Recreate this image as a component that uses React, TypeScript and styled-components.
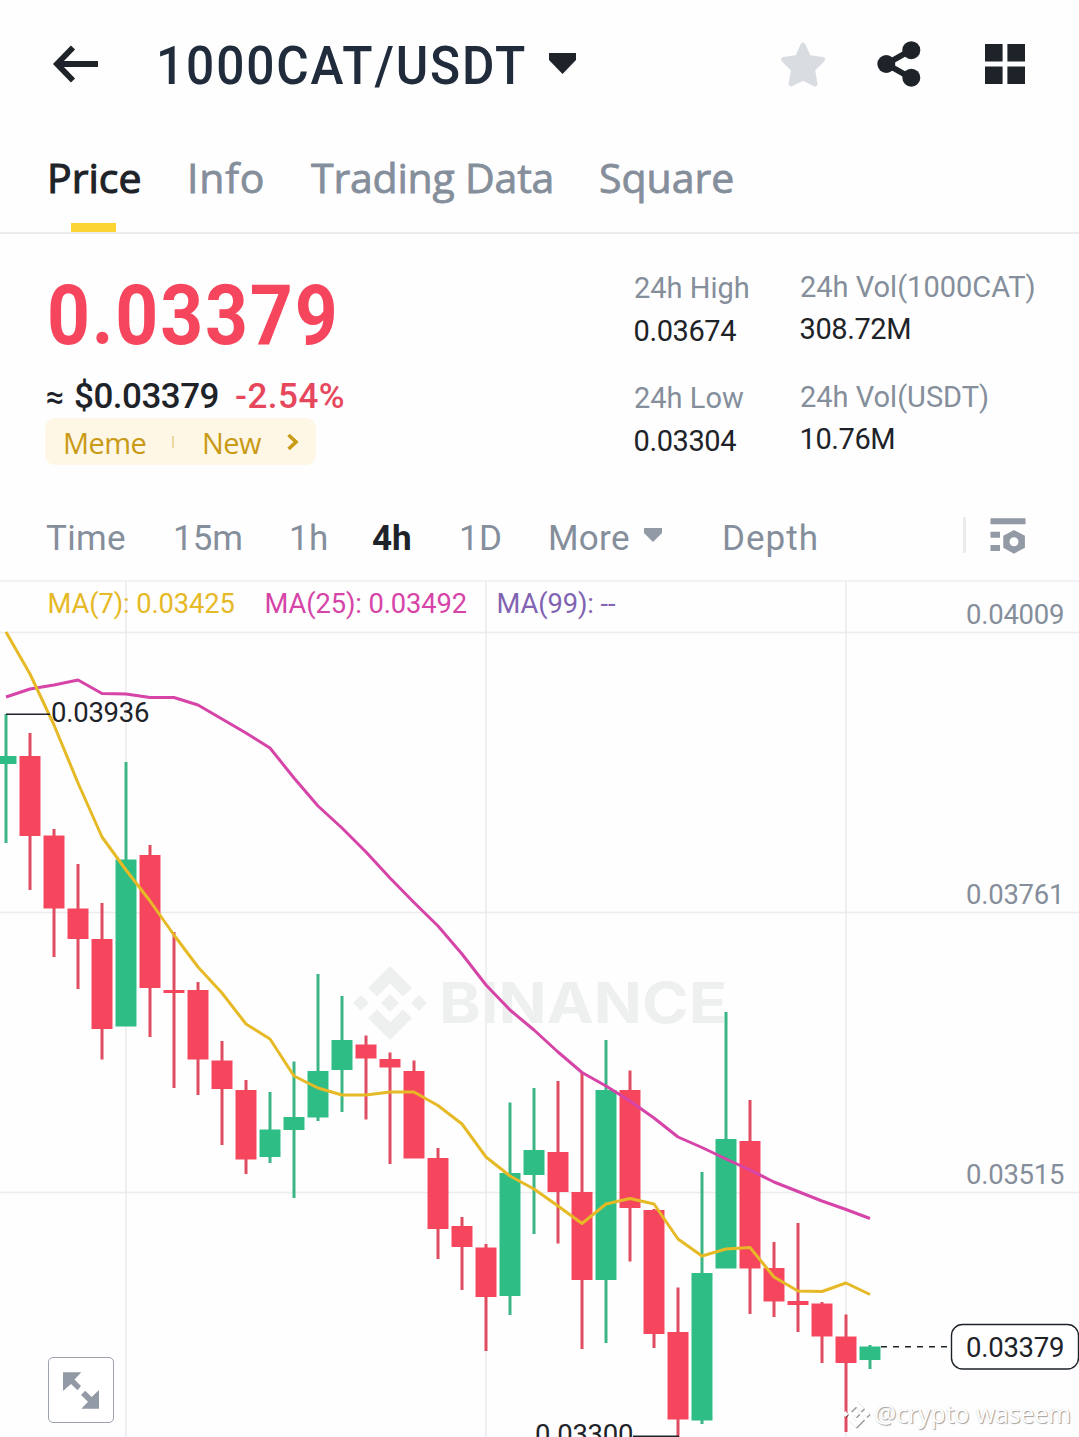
import React from "react";
import styled, { createGlobalStyle } from "styled-components";

const c = {
  ink: "#1e2329",
  title: "#202b3b",
  muted: "#858e9b",
  icon: "#929aa5",
  line: "#eaebec",
  red: "#f6465d",
  green: "#2ebd85",
  brand: "#fcd535",
  ma7: "#e6b926",
  ma25: "#d644a8",
  ma99: "#8163b3",
};

const GlobalStyle = createGlobalStyle`
  * { box-sizing: border-box; }
  body { margin: 0; background: #fff; font-family: Roboto, "Liberation Sans", sans-serif; }
`;

const Screen = styled.main`
  width: 1079px;
  height: 1437px;
  overflow: hidden;
  background: #fefefe;
  color: ${c.ink};
  display: flex;
  flex-direction: column;
`;

const Header = styled.header`
  height: 130px;
  padding: 0 54px 2px 52px;
  display: flex;
  align-items: center;
  justify-content: space-between;
`;

const Pair = styled.div`
  display: flex;
  align-items: center;
`;

const Title = styled.h1`
  margin: 4px 0 0 58px;
  width: 393px;
  font-size: 54px;
  line-height: 64px;
  font-weight: 500;
  letter-spacing: 2px;
  white-space: nowrap;
  color: ${c.title};
  transform: scaleX(0.92);
  transform-origin: left center;
`;

const Actions = styled.div`
  display: flex;
  align-items: center;
  gap: 50px;
`;

const Tabs = styled.nav`
  display: grid;
  grid-template-columns: 140px 124px 288px auto;
  height: 104px;
  padding-left: 47px;
  border-bottom: 2px solid ${c.line};
`;

const Tab = styled.div<{ $active?: boolean; $spacing?: number }>`
  justify-self: start;
  padding-top: 2px;
  font-family: "Open Sans", Roboto, sans-serif;
  font-size: 41px;
  line-height: 91px;
  letter-spacing: ${(p) => p.$spacing ?? 0}px;
  -webkit-text-stroke: ${(p) => (p.$active ? 1.1 : 0.8)}px currentColor;
  color: ${(p) => (p.$active ? c.ink : c.muted)};
  white-space: nowrap;
  &::after {
    content: "";
    display: ${(p) => (p.$active ? "block" : "none")};
    width: 45px;
    height: 9px;
    margin-left: 24px;
    background: ${c.brand};
  }
`;

const Summary = styled.section`
  height: 261px;
  display: grid;
  grid-template-columns: 588px 166px 1fr;
  padding-left: 46px;
`;

const PriceColumn = styled.div`
  padding-top: 39px;
  display: flex;
  flex-direction: column;
  align-items: flex-start;
`;

const Price = styled.div`
  margin-left: 1px;
  font-size: 84px;
  line-height: 86px;
  font-weight: 700;
  letter-spacing: 2px;
  color: ${c.red};
  transform: scaleX(0.893);
  transform-origin: left center;
`;

const SubPrice = styled.div`
  margin-top: 16px;
  height: 43px;
  display: grid;
  grid-template-columns: 28px 161px auto;
  font-size: 35px;
  line-height: 44px;
  font-weight: 500;
  letter-spacing: -0.5px;
  white-space: nowrap;
`;

const Approx = styled.span`
  font-size: 32px;
`;

const Change = styled.span`
  color: #e6475c;
  letter-spacing: 0.5px;
`;

const Tags = styled.div`
  margin-left: -1px;
  width: 271px;
  height: 47px;
  padding: 0 17px 0 18px;
  border-radius: 10px;
  background: #fef7e5;
  display: grid;
  grid-template-columns: 109px 30px 1fr auto;
  align-items: center;
  color: #c99a16;
`;

const Tag = styled.span`
  padding-top: 1px;
  font-family: "Open Sans", Roboto, sans-serif;
  font-size: 29px;
  letter-spacing: -0.6px;
`;

const TagRule = styled.i`
  width: 2px;
  height: 12px;
  background: #ecd9a0;
`;

const Stats = styled.dl<{ $top: number; $line: number; $gap: number }>`
  margin: 0;
  padding-top: ${(p) => p.$top}px;
  line-height: ${(p) => p.$line}px;
  display: flex;
  flex-direction: column;
  gap: ${(p) => p.$gap}px;
  font-size: 29px;
  white-space: nowrap;
`;

const StatLabel = styled.dt`
  color: ${c.muted};
`;

const StatValue = styled.dd`
  margin: 0 0 0 -0.5px;
  letter-spacing: -0.4px;
`;

const Intervals = styled.nav`
  height: 85px;
  padding: 0 53px 0 46px;
  display: grid;
  grid-template-columns: 127px 116px 83px 87px 89px 174px 1fr auto auto;
  align-items: center;
  font-size: 35px;
  color: ${c.muted};
`;

const Interval = styled.span<{ $active?: boolean; $spacing?: number }>`
  padding-top: 2px;
  display: flex;
  align-items: center;
  gap: 14px;
  font-weight: ${(p) => (p.$active ? 700 : 400)};
  color: ${(p) => (p.$active ? c.ink : "inherit")};
  letter-spacing: ${(p) => p.$spacing ?? 0.3}px;
`;

const MoreArrow = styled.svg`
  margin-top: -2px;
`;

const IntervalRule = styled.i`
  width: 3px;
  height: 36px;
  margin: 0 24px 5px 0;
  background: #e9ebed;
`;

const SettingsIcon = styled.svg`
  margin-bottom: 2px;
`;

const ChartArea = styled.section`
  position: relative;
  height: 857px;
  border-top: 2px solid #f0f2f3;
`;

const ChartSvg = styled.svg`
  display: block;
  margin-top: -2px;
  font-family: Roboto, "Liberation Sans", sans-serif;
  font-size: 27.5px;
`;

const Legend = styled.div`
  position: absolute;
  top: 1px;
  left: 47.5px;
  display: grid;
  grid-template-columns: 217px 232px auto;
  font-size: 27.3px;
  letter-spacing: -0.1px;
  line-height: 42px;
  white-space: nowrap;
`;

const LegendItem = styled.span<{ $color: string }>`
  color: ${(p) => p.$color};
`;

const Expand = styled.button`
  position: absolute;
  left: 48px;
  top: 775px;
  width: 66px;
  height: 66px;
  padding: 0;
  border: 1.5px solid #9ba2ac;
  border-radius: 5px;
  background: #fff;
  display: grid;
  place-items: center;
`;

const Author = styled.div`
  position: absolute;
  right: 8px;
  top: 814px;
  display: flex;
  align-items: center;
  gap: 4px;
  font-family: "Noto Sans", sans-serif;
  font-size: 24.5px;
  line-height: 36px;
  color: #fff;
  text-shadow: 1px 1px 1px rgba(0, 0, 0, 0.36), 0 0 1px rgba(0, 0, 0, 0.15);
  svg { filter: drop-shadow(1px 1px 0.5px rgba(0, 0, 0, 0.4)); }
`;

type Candle = [number, number, number, number, boolean];
// wick top, wick bottom, body top, body bottom, rising
const candles: Candle[] = [
  [714, 843, 756, 764, true], [733, 890, 756, 836, false], [829, 957, 835.5, 908.5, false],
  [864, 989, 908.5, 939, false], [903, 1059.5, 939, 1029, false], [762, 1026, 859.5, 1026.5, true],
  [845, 1037, 855, 988, false], [932, 1088, 990, 993, false], [982, 1095, 990, 1059.5, false],
  [1041, 1145, 1060.5, 1089, false], [1080, 1174, 1090, 1159.5, false], [1092, 1163, 1129.5, 1157, true],
  [1061.5, 1198, 1117, 1130, true], [974, 1121, 1071, 1117.5, true], [996, 1112, 1040, 1070, true],
  [1035.5, 1119.5, 1044.5, 1058.5, false], [1052.5, 1164, 1059, 1067.5, false], [1060.5, 1158, 1071, 1158.5, false],
  [1148, 1259, 1158, 1229, false], [1217, 1290, 1226, 1247, false], [1244, 1351, 1247.5, 1297, false],
  [1102.5, 1315, 1173, 1296, true], [1088, 1234, 1150, 1175, true], [1081, 1243.5, 1152, 1192, false],
  [1072, 1349, 1192, 1280, false], [1040, 1343, 1090, 1280, true], [1070.5, 1261.5, 1090, 1208, false],
  [1209, 1348, 1210, 1334, false], [1287.5, 1437, 1332, 1419.5, false], [1172, 1424, 1273, 1420.5, true],
  [1012, 1268, 1139, 1268.5, true], [1100, 1314, 1141, 1268.5, false], [1242, 1317, 1268, 1301.5, false],
  [1223, 1332, 1301, 1305, false], [1302, 1363, 1303.5, 1336.5, false], [1314.5, 1432, 1336.5, 1363, false],
  [1345, 1369, 1346.5, 1360, true],
];

const ma7 = [
  632, 674, 725, 783, 837, 870, 901, 935, 967, 993, 1024, 1039, 1076, 1088, 1095, 1095, 1092, 1092, 1105.5,
  1124, 1157, 1176, 1189, 1206, 1223.5, 1204, 1198.5, 1204, 1239, 1256, 1249, 1247.5, 1277, 1291, 1291.5, 1283, 1294.5,
];
const ma25 = [
  697, 689, 685, 680, 693.5, 694, 697.5, 697.5, 705, 719, 733, 748, 778, 806, 828, 852, 878, 902.5, 926,
  954, 985, 1010, 1030, 1052, 1072.5, 1086, 1101, 1118, 1137, 1147.5, 1159, 1170, 1182, 1191.5, 1201, 1209.5, 1218.5,
];

const xAt = (i: number) => 6 + i * 24;
const toPoints = (ys: number[]) => ys.map((y, i) => `${xAt(i)},${y}`).join(" ");

const PriceLabel = ({ x, y, fill = c.ink, children }: { x: number; y: number; fill?: string; children: string }) => (
  <text x={x} y={y} fill={fill} textLength={98.5}>{children}</text>
);

const logoPath =
  "M-22 -15L0 -37L22 -15L13 -6.5L0 -19.5L-13 -6.5ZM-22 15L-13 6.5L0 19.5L13 6.5L22 15L0 37Z" +
  "M0 -9L9 0L0 9L-9 0ZM-29 -8L-21 0L-29 8L-37 0ZM29 -8L37 0L29 8L21 0Z";

const CandleChart = () => (
  <ChartSvg width="1079" height="857" viewBox="0 580 1079 857">
    <g stroke="#ebecee" strokeWidth="1.6">
      {[126, 486, 846].map((x) => <line key={x} x1={x} x2={x} y1="582" y2="1437" />)}
      {[632.5, 912.5, 1192.5].map((y) => <line key={y} x1="0" x2="1079" y1={y} y2={y} />)}
    </g>
    <g fill="#eef0ef">
      <path transform="translate(390 1003)" d={logoPath} />
      <text x="439" y="1023" fontFamily="Inter" fontWeight="700" fontSize="56" textLength="288" lengthAdjust="spacingAndGlyphs">BINANCE</text>
    </g>
    <PriceLabel x={966} y={624} fill={c.muted}>0.04009</PriceLabel>
    <PriceLabel x={966} y={904} fill={c.muted}>0.03761</PriceLabel>
    <PriceLabel x={966} y={1184} fill={c.muted}>0.03515</PriceLabel>
    {candles.map(([high, low, top, bottom, up], i) => (
      <g key={i} fill={up ? c.green : c.red}>
        <rect x={xAt(i) - 1.5} y={high} width="3" height={low - high} fill={up ? "#3cb586" : "#e04c60"} />
        <rect x={xAt(i) - 10.5} y={top} width="21" height={bottom - top} />
      </g>
    ))}
    <g fill="none" strokeWidth="3" strokeLinejoin="round">
      <polyline points={toPoints(ma25)} stroke={c.ma25} />
      <polyline points={toPoints(ma7)} stroke={c.ma7} />
    </g>
    <g stroke={c.ink} strokeWidth="1.6">
      <line x1="6" x2="50" y1="714.3" y2="714.3" />
      <line x1="633" x2="679" y1="1436.2" y2="1436.2" />
      <line x1="881" x2="948" y1="1346.7" y2="1346.7" strokeDasharray="6 6" />
    </g>
    <PriceLabel x={51} y={722}>0.03936</PriceLabel>
    <PriceLabel x={535} y={1443.5}>0.03300</PriceLabel>
    <rect x="951.5" y="1324.5" width="127" height="44.5" rx="11" fill="#fff" stroke={c.ink} strokeWidth="1.4" />
    <PriceLabel x={966} y={1357}>0.03379</PriceLabel>
  </ChartSvg>
);

const App = () => (
  <>
    <GlobalStyle />
    <Screen>
      <Header>
        <Pair>
          <svg width="46" height="40" viewBox="52 44 46 40" fill="none" stroke={c.ink} strokeWidth="5.8">
            <path d="M98 64H57M73 47.5L57 64L73 80.5" />
          </svg>
          <Title>1000CAT/USDT</Title>
          <svg width="28" height="22" viewBox="549 54 28 22" fill={c.ink}>
            <path d="M549 54H576V61L562.5 75L549 61Z" />
          </svg>
        </Pair>
        <Actions>
          <svg width="48" height="48" viewBox="779 40 48 48" fill="#d9dce1" stroke="#d9dce1" strokeWidth="5" strokeLinejoin="round">
            <path d="M803 45L808.5 57.5L822.5 59.5L812.5 69.5L815 84L803 78L791 84L793.5 69.5L783.5 59.5L797.5 57.5Z" />
          </svg>
          <svg width="44" height="48" viewBox="877 40 44 48" fill={c.ink} stroke={c.ink}>
            <path d="M911 50L886.5 64L911 78" fill="none" strokeWidth="6" />
            <g stroke="none">
              <circle cx="886.3" cy="64" r="9" />
              <circle cx="911.3" cy="50.2" r="9" />
              <circle cx="911.3" cy="77.7" r="9" />
            </g>
          </svg>
          <svg width="54" height="40" viewBox="971 44 54 40" fill={c.ink}>
            <path d="M985 44H1002.6V61.5H985ZM1007.4 44H1025V61.5H1007.4ZM985 66.5H1002.6V84H985ZM1007.4 66.5H1025V84H1007.4Z" />
          </svg>
        </Actions>
      </Header>

      <Tabs>
        <Tab $active>Price</Tab>
        <Tab $spacing={0.8}>Info</Tab>
        <Tab $spacing={-0.2}>Trading Data</Tab>
        <Tab>Square</Tab>
      </Tabs>

      <Summary>
        <PriceColumn>
          <Price>0.03379</Price>
          <SubPrice>
            <Approx>≈</Approx>
            <span>$0.03379</span>
            <Change>-2.54%</Change>
          </SubPrice>
          <Tags>
            <Tag>Meme</Tag>
            <TagRule />
            <Tag>New</Tag>
            <svg width="12" height="18" viewBox="0 0 12 18" fill="none" stroke="#c99a16" strokeWidth="3.6">
              <path d="M1.5 2L9 9L1.5 16" />
            </svg>
          </Tags>
        </PriceColumn>
        <Stats $top={33} $line={43} $gap={24}>
          <div>
            <StatLabel>24h High</StatLabel>
            <StatValue>0.03674</StatValue>
          </div>
          <div>
            <StatLabel>24h Low</StatLabel>
            <StatValue>0.03304</StatValue>
          </div>
        </Stats>
        <Stats $top={32} $line={42} $gap={26}>
          <div>
            <StatLabel>24h Vol(1000CAT)</StatLabel>
            <StatValue>308.72M</StatValue>
          </div>
          <div>
            <StatLabel>24h Vol(USDT)</StatLabel>
            <StatValue>10.76M</StatValue>
          </div>
        </Stats>
      </Summary>

      <Intervals>
        <Interval>Time</Interval>
        <Interval $spacing={0}>15m</Interval>
        <Interval>1h</Interval>
        <Interval $active $spacing={0}>4h</Interval>
        <Interval>1D</Interval>
        <Interval>
          More
          <MoreArrow width="18" height="20" viewBox="643 528 18 20" fill={c.icon}>
            <path d="M643 528H661V533L652 542L643 533Z" />
          </MoreArrow>
        </Interval>
        <Interval $spacing={1}>Depth</Interval>
        <IntervalRule />
        <SettingsIcon width="36" height="38" viewBox="990.5 518 36 38" fill={c.icon}>
          <path d="M991 518.3H1026V524.3H991ZM991 531.7H1000.5V537.7H991ZM991 545H1000.5V551H991Z" />
          <path fillRule="evenodd" d="M1014.5 530L1025.4 535.8V547.8L1014.5 553.7L1003.8 547.8V535.8ZM1014.5 537.3A4.5 4.5 0 1 0 1014.5 546.3A4.5 4.5 0 1 0 1014.5 537.3Z" />
        </SettingsIcon>
      </Intervals>

      <ChartArea>
        <CandleChart />
        <Legend>
          <LegendItem $color={c.ma7}>MA(7): 0.03425</LegendItem>
          <LegendItem $color={c.ma25}>MA(25): 0.03492</LegendItem>
          <LegendItem $color={c.ma99}>MA(99): --</LegendItem>
        </Legend>
        <Expand aria-label="Expand chart">
          <svg width="36" height="37" viewBox="63 1372 36 37" fill={c.icon}>
            <path d="M63 1372.3H81.3L74.5 1379.5L81 1386L77.5 1390.3L71 1384L63 1391Z" />
            <path d="M99 1408.7H81.3L88 1401.7L81 1395L85.2 1390.7L91.7 1397L99 1390Z" />
          </svg>
        </Expand>
        <Author>
          <svg width="28" height="28" viewBox="-38 -38 76 76" fill="#fff"><path d={logoPath} /></svg>
          @crypto waseem
        </Author>
      </ChartArea>
    </Screen>
  </>
);

export default App;
